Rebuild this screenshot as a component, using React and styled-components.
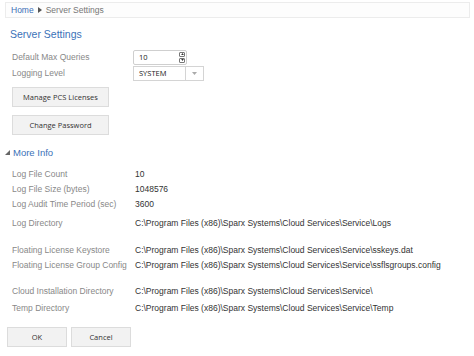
import React from 'react'
import styled, { createGlobalStyle } from 'styled-components';

const GlobalStyle = createGlobalStyle`
    html, body {
        margin: 0;
        padding: 0;
        background: #ffffff;
    }
    body {
        font-family: "Liberation Sans", Arial, sans-serif;
        font-size: 8.5px;
        color: #333;
    }
`;

const settings = [
    { label: 'Default Max Queries', kind: 'number', value: '10' },
    { label: 'Logging Level', kind: 'select', value: 'SYSTEM' },
];

const infoGroups = [
    {
        rowHeight: 15,
        space: 0,
        rows: [
            { label: 'Log File Count', value: '10' },
            { label: 'Log File Size (bytes)', value: '1048576' },
            { label: 'Log Audit Time Period (sec)', value: '3600' },
            { label: 'Log Directory', value: 'C:\\Program Files (x86)\\Sparx Systems\\Cloud Services\\Service\\Logs', gap: 4 },
        ],
    },
    {
        rowHeight: 15.5,
        space: 12,
        rows: [
            { label: 'Floating License Keystore', value: 'C:\\Program Files (x86)\\Sparx Systems\\Cloud Services\\Service\\sskeys.dat' },
            { label: 'Floating License Group Config', value: 'C:\\Program Files (x86)\\Sparx Systems\\Cloud Services\\Service\\ssflsgroups.config' },
        ],
    },
    {
        rowHeight: 16.5,
        space: 10,
        rows: [
            { label: 'Cloud Installation Directory', value: 'C:\\Program Files (x86)\\Sparx Systems\\Cloud Services\\Service\\' },
            { label: 'Temp Directory', value: 'C:\\Program Files (x86)\\Sparx Systems\\Cloud Services\\Service\\Temp' },
        ],
    },
];

const App = () => {
  return (
    <>
        <GlobalStyle />
        <Page>
            <Breadcrumb>
                <a>Home</a>
                <svg width="4" height="6" viewBox="0 0 4 6"><path d="M0 0 L4 3 L0 6 Z" fill="#555" /></svg>
                <span>Server Settings</span>
            </Breadcrumb>

            <Title>Server Settings</Title>

            <Form>
                {settings.map((s, index) => (
                    <FormRow key={index}>
                        <Label>{s.label}</Label>
                        {s.kind === 'number' ? (
                            <NumberBox>
                                <span>{s.value}</span>
                                <Spinner>
                                    <SpinBtn>
                                        <svg width="4" height="3" viewBox="0 0 4 3"><path d="M0 3 L2 0 L4 3 Z" fill="#333" /></svg>
                                    </SpinBtn>
                                    <SpinBtn>
                                        <svg width="4" height="3" viewBox="0 0 4 3"><path d="M0 0 L4 0 L2 3 Z" fill="#333" /></svg>
                                    </SpinBtn>
                                </Spinner>
                            </NumberBox>
                        ) : (
                            <SelectBox>
                                <span>{s.value}</span>
                                <SelectArrow>
                                    <svg width="5" height="3" viewBox="0 0 5 3"><path d="M0 0 L5 0 L2.5 3 Z" fill="#aaa" /></svg>
                                </SelectArrow>
                            </SelectBox>
                        )}
                    </FormRow>
                ))}
                <ActionButton>Manage PCS Licenses</ActionButton>
                <ActionButton>Change Password</ActionButton>
            </Form>

            <Section>
                <SectionHeader>
                    <svg width="5" height="5" viewBox="0 0 5 5"><path d="M5 0 L5 5 L0 5 Z" fill="#666" /></svg>
                    <span>More Info</span>
                </SectionHeader>
                {infoGroups.map((group, gi) => (
                    <InfoGroup key={gi} $space={group.space}>
                        {group.rows.map((row, ri) => (
                            <InfoRow key={ri} $height={group.rowHeight} $gap={row.gap || 0}>
                                <InfoLabel>{row.label}</InfoLabel>
                                <InfoValue>{row.value}</InfoValue>
                            </InfoRow>
                        ))}
                    </InfoGroup>
                ))}
            </Section>

            <Footer>
                <FooterButton>OK</FooterButton>
                <FooterButton>Cancel</FooterButton>
            </Footer>
        </Page>
    </>
  )
}

const Page = styled.div`
    width: 474px;
    height: 356px;
    overflow: hidden;
    box-sizing: border-box;
    padding-top: 2px;
`;

const Breadcrumb = styled.div`
    margin: 0 4px 0 5px;
    height: 16px;
    box-sizing: border-box;
    border: 1px solid #ececec;
    background: #fdfdfd;
    display: flex;
    align-items: center;
    gap: 4px;
    padding-left: 5px;
    a {
        color: #3b6fb6;
    }
    span {
        color: #777;
    }
`;

const Title = styled.h2`
    margin: 10px 0 0 10px;
    font-size: 10.5px;
    line-height: 13px;
    font-weight: normal;
    color: #3b72b8;
`;

const Form = styled.div`
    margin-top: 8px;
    padding-left: 12px;
    display: flex;
    flex-direction: column;
`;

const FormRow = styled.div`
    display: flex;
    align-items: center;
    height: 16px;
`;

const Label = styled.div`
    width: 121px;
    color: #888;
`;

const NumberBox = styled.div`
    width: 54px;
    height: 15px;
    box-sizing: border-box;
    border: 1px solid #cfcfcf;
    border-radius: 2px;
    display: flex;
    align-items: center;
    justify-content: space-between;
    padding-left: 5px;
    font-family: "Open Sans", sans-serif;
    font-size: 7.5px;
    color: #222;
`;

const Spinner = styled.div`
    display: flex;
    flex-direction: column;
    gap: 1px;
    margin-right: 1px;
`;

const SpinBtn = styled.div`
    width: 6px;
    height: 5px;
    box-sizing: border-box;
    border: 1px solid #777;
    border-radius: 1px;
    display: flex;
    align-items: center;
    justify-content: center;
    svg { width: 3px; height: 2px; }
`;

const SelectBox = styled.div`
    width: 71px;
    height: 15px;
    box-sizing: border-box;
    border: 1px solid #d4d4d4;
    display: flex;
    align-items: center;
    justify-content: space-between;
    padding-left: 5px;
    font-family: "Open Sans", sans-serif;
    font-size: 7.5px;
    color: #222;
`;

const SelectArrow = styled.div`
    width: 17px;
    height: 100%;
    border-left: 1px solid #d4d4d4;
    display: flex;
    align-items: center;
    justify-content: center;
`;

const ActionButton = styled.button`
    width: 97px;
    height: 20px;
    margin-top: 8px;
    border: 1px solid #dcdcdc;
    background: #f2f2f2;
    font-family: "Open Sans", sans-serif;
    font-size: 7.5px;
    color: #333;
    padding: 0;
    &:first-of-type {
        margin-top: 6px;
    }
`;

const Section = styled.div`
    margin-top: 9px;
`;

const SectionHeader = styled.div`
    display: flex;
    align-items: center;
    gap: 3px;
    padding-left: 5px;
    height: 16px;
    color: #3b72b8;
    font-size: 9.5px;
    margin-bottom: 6px;
`;

const InfoGroup = styled.div`
    display: flex;
    flex-direction: column;
    padding-left: 12px;
    margin-top: ${p => p.$space}px;
`;

const InfoRow = styled.div`
    display: flex;
    align-items: center;
    height: ${p => p.$height}px;
    margin-top: ${p => p.$gap}px;
`;

const InfoLabel = styled.div`
    width: 123px;
    color: #888;
    white-space: nowrap;
`;

const InfoValue = styled.div`
    color: #333;
    white-space: nowrap;
`;

const Footer = styled.div`
    display: flex;
    gap: 4px;
    padding-left: 7px;
    margin-top: 11px;
`;

const FooterButton = styled.button`
    width: 60px;
    height: 20px;
    border: 1px solid #dcdcdc;
    background: #f2f2f2;
    font-family: "Open Sans", sans-serif;
    font-size: 7.5px;
    color: #333;
    padding: 0;
`;

export default App
